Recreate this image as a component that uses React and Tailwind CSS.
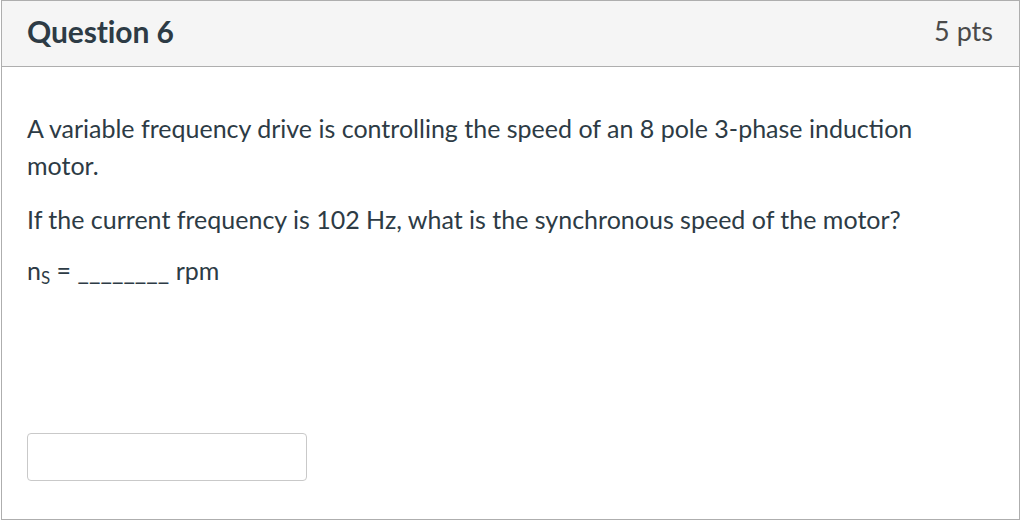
export default function App() {
  return (
    <div className="w-[1022px] h-[527px] bg-white" style={{ fontFamily: "Lato, 'Open Sans', sans-serif" }}>
      <div className="ml-px w-[1019px] h-[520px] border border-[#aeaeae] flex flex-col">
        <div className="h-[66px] bg-[#f5f5f5] border-b border-[#aeaeae] flex items-center justify-between pl-[25px] pr-[26px] pb-[4px]">
          <h2 className="text-[30px] font-bold text-[#2d3b45] tracking-[-0.1px]">Question 6</h2>
          <div className="text-[27px] text-[#4a4a4a]">5 pts</div>
        </div>
        <div className="pl-[25px] pt-[43px] text-[25px] leading-[37px] text-[#2d3b45]">
          <p className="max-w-[930px]">A variable frequency drive is controlling the speed of an 8 pole 3-phase induction motor.</p>
          <p className="mt-[17px]">If the current frequency is 102 Hz, what is the synchronous speed of the motor?</p>
          <p className="mt-[14px]">n<sub className="text-[17px]">S</sub> = ________ rpm</p>
          <div className="mt-[144px] w-[280px] h-[48px] border border-[#c9c9c9] rounded-[4px] bg-white"></div>
        </div>
      </div>
    </div>
  );
}
